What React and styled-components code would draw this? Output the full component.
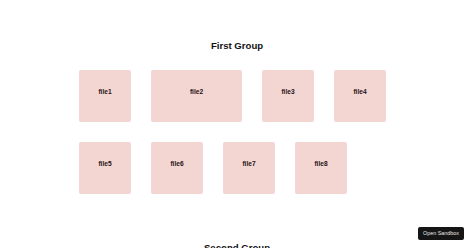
import React from "react";
import styled, { createGlobalStyle } from "styled-components";

const Global = createGlobalStyle`
  html, body { margin: 0; padding: 0; background: #ffffff; }
  body { font-family: "Liberation Sans", Arial, sans-serif; color: #111; }
`;

const Page = styled.div`
  padding-top: 2px;
`;

const Section = styled.section`
  padding-top: 38px;
`;

const Title = styled.h2`
  margin: 0 0 8px;
  font-size: 9.6px;
  line-height: 12px;
  font-weight: 700;
  text-align: center;
  color: #111;
`;

const Grid = styled.div`
  width: 336px;
  margin: 0 auto;
  display: flex;
  flex-wrap: wrap;
  justify-content: flex-start;
`;

const Tile = styled.div`
  box-sizing: border-box;
  width: ${(p) => (p.$wide ? 91 : 52)}px;
  height: 52px;
  margin: 10px;
  background: #f3d5d2;
  border-radius: 2px;
  display: flex;
  align-items: center;
  justify-content: center;
  padding-bottom: 9px;
  font-size: 6.6px;
  font-weight: 700;
  color: #1f1414;
`;

const SandboxButton = styled.a`
  position: fixed;
  right: 10px;
  bottom: 8px;
  background: #151515;
  color: #e8e8e8;
  font-size: 5.4px;
  line-height: 13px;
  padding: 0 5px;
  border-radius: 2px;
  text-decoration: none;
  font-family: "Liberation Sans", Arial, sans-serif;
`;

const groups = [
  {
    title: "First Group",
    files: [
      { name: "file1" },
      { name: "file2", wide: true },
      { name: "file3" },
      { name: "file4" },
      { name: "file5" },
      { name: "file6" },
      { name: "file7" },
      { name: "file8" },
    ],
  },
  {
    title: "Second Group",
    files: [
      { name: "file9" },
      { name: "file10" },
      { name: "file11" },
      { name: "file12" },
    ],
  },
];

export default function App() {
  return (
    <>
      <Global />
      <Page>
        {groups.map((g) => (
          <Section key={g.title}>
            <Title>{g.title}</Title>
            <Grid>
              {g.files.map((f) => (
                <Tile key={f.name} $wide={f.wide}>
                  {f.name}
                </Tile>
              ))}
            </Grid>
          </Section>
        ))}
      </Page>
      <SandboxButton href="#">Open Sandbox</SandboxButton>
    </>
  );
}
